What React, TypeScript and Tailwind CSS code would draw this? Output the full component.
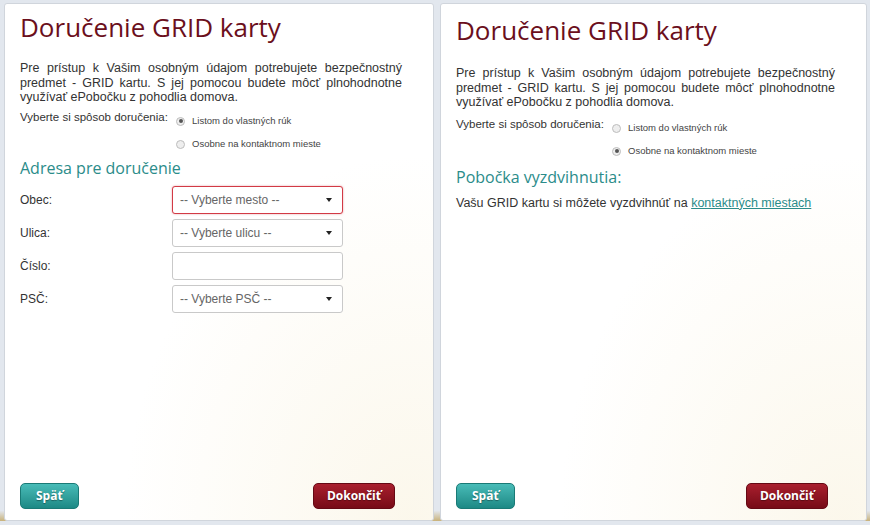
import React from 'react';

type Mode = 'letter' | 'pickup';

const Radio: React.FC<{ checked: boolean; label: string }> = ({ checked, label }) => (
  <div className="flex items-center gap-[7px] h-[23px]">
    <span className="w-[9px] h-[9px] rounded-full border border-[#bdbdbd] bg-[#eeeeee] flex items-center justify-center">
      {checked && <span className="w-[4px] h-[4px] rounded-full bg-[#555]" />}
    </span>
    <span className="text-[9.5px] text-[#444]">{label}</span>
  </div>
);

const Caret = () => (
  <svg width="6" height="4" viewBox="0 0 6 4" className="shrink-0">
    <path d="M0 0h6L3 4z" fill="#222" />
  </svg>
);

const SelectBox: React.FC<{ text?: string; invalid?: boolean }> = ({ text, invalid }) => (
  <div
    className={`w-[171px] h-[28px] rounded-[3px] bg-white flex items-center justify-between pl-[7px] pr-[10px] border ${
      invalid ? 'border-[#d23a45] shadow-[0_0_2px_rgba(210,58,69,0.5)]' : 'border-[#c9c9c9]'
    }`}
  >
    <span className="text-[12px] text-[#666]">{text}</span>
    {text && <Caret />}
  </div>
);

const FieldRow: React.FC<{ label: string; text?: string; invalid?: boolean }> = ({ label, text, invalid }) => (
  <div className="flex items-center h-[28px]">
    <span className="w-[152px] text-[12px] text-[#333]">{label}</span>
    <SelectBox text={text} invalid={invalid} />
  </div>
);

const Panel: React.FC<{ mode: Mode; className?: string }> = ({ mode, className }) => {
  const letter = mode === 'letter';
  return (
    <div
      className={`relative flex flex-col h-[518px] bg-white border border-[#d0d5dc] rounded-[3px] overflow-hidden ${className ?? ''}`}
    >
      <div className="absolute inset-0 bg-[radial-gradient(ellipse_at_95%_100%,rgba(246,236,206,0.4),rgba(255,255,255,0)_50%)] pointer-events-none" />
      <div
        className={`relative flex-1 px-[15px] font-['Liberation_Sans',Arial,sans-serif] ${
          letter ? 'pt-[7px]' : 'pt-[10px]'
        }`}
      >
        <h1 className="font-['Open_Sans',sans-serif] font-medium text-[26px] leading-[32px] text-[#6b0f1c]">
          Doručenie GRID karty
        </h1>
        <p
          className={`text-[12.5px] leading-[14.5px] text-[#333] text-justify pr-[16px] ${
            letter ? 'mt-[18px]' : 'mt-[20px]'
          }`}
        >
          Pre prístup k Vašim osobným údajom potrebujete bezpečnostný predmet - GRID kartu. S jej pomocou budete môcť plnohodnotne využívať ePobočku z pohodlia domova.
        </p>
        <div className={`flex ${letter ? 'mt-[2px]' : 'mt-[4px]'}`}>
          <span className="w-[156px] text-[11.5px] text-[#333] pt-[2px]">Vyberte si spôsob doručenia:</span>
          <div className="flex flex-col pt-[3px]">
            <Radio checked={letter} label="Listom do vlastných rúk" />
            <Radio checked={!letter} label="Osobne na kontaktnom mieste" />
          </div>
        </div>

        {letter ? (
          <>
            <h2 className="mt-[1px] font-['Open_Sans',sans-serif] text-[16px] leading-[22px] text-[#2b8c8a]">
              Adresa pre doručenie
            </h2>
            <div className="mt-[7px] flex flex-col gap-[5px]">
              <FieldRow label="Obec:" text="-- Vyberte mesto --" invalid />
              <FieldRow label="Ulica:" text="-- Vyberte ulicu --" />
              <FieldRow label="Číslo:" />
              <FieldRow label="PSČ:" text="-- Vyberte PSČ --" />
            </div>
          </>
        ) : (
          <>
            <h2 className="mt-[3px] font-['Open_Sans',sans-serif] text-[16px] leading-[22px] text-[#2b8c8a]">
              Pobočka vyzdvihnutia:
            </h2>
            <p className="mt-[6px] text-[12.5px] text-[#333]">
              Vašu GRID kartu si môžete vyzdvihnúť na{' '}
              <a className="text-[#2b8c8a] underline">kontaktných miestach</a>
            </p>
          </>
        )}
      </div>

      <div className="relative flex justify-between items-center px-[15px] pb-[11px]">
        <button className="h-[26px] px-[15px] rounded-[5px] bg-gradient-to-b from-[#48bcb8] to-[#1c8985] border border-[#1a7a76] text-white text-[12px] font-bold font-['Open_Sans',sans-serif] [text-shadow:0_1px_1px_rgba(0,0,0,0.35)]">
          Späť
        </button>
        <button className="h-[26px] px-[13px] mr-[23px] rounded-[5px] bg-gradient-to-b from-[#a91f2e] to-[#770b17] border border-[#650914] text-white text-[12px] font-bold font-['Open_Sans',sans-serif] [text-shadow:0_1px_1px_rgba(0,0,0,0.35)]">
          Dokončiť
        </button>
      </div>
    </div>
  );
};

export default function App() {
  return (
    <div className="w-[870px] h-[525px] bg-[#e2e7ee] overflow-hidden">
      <div className="flex pt-[3px] pl-[4px] gap-[6px] h-[521px] bg-[linear-gradient(to_bottom,#e2e7ee_98%,#c9b27a)]">
        <Panel mode="letter" className="w-[430px]" />
        <Panel mode="pickup" className="w-[427px]" />
      </div>
    </div>
  );
}
